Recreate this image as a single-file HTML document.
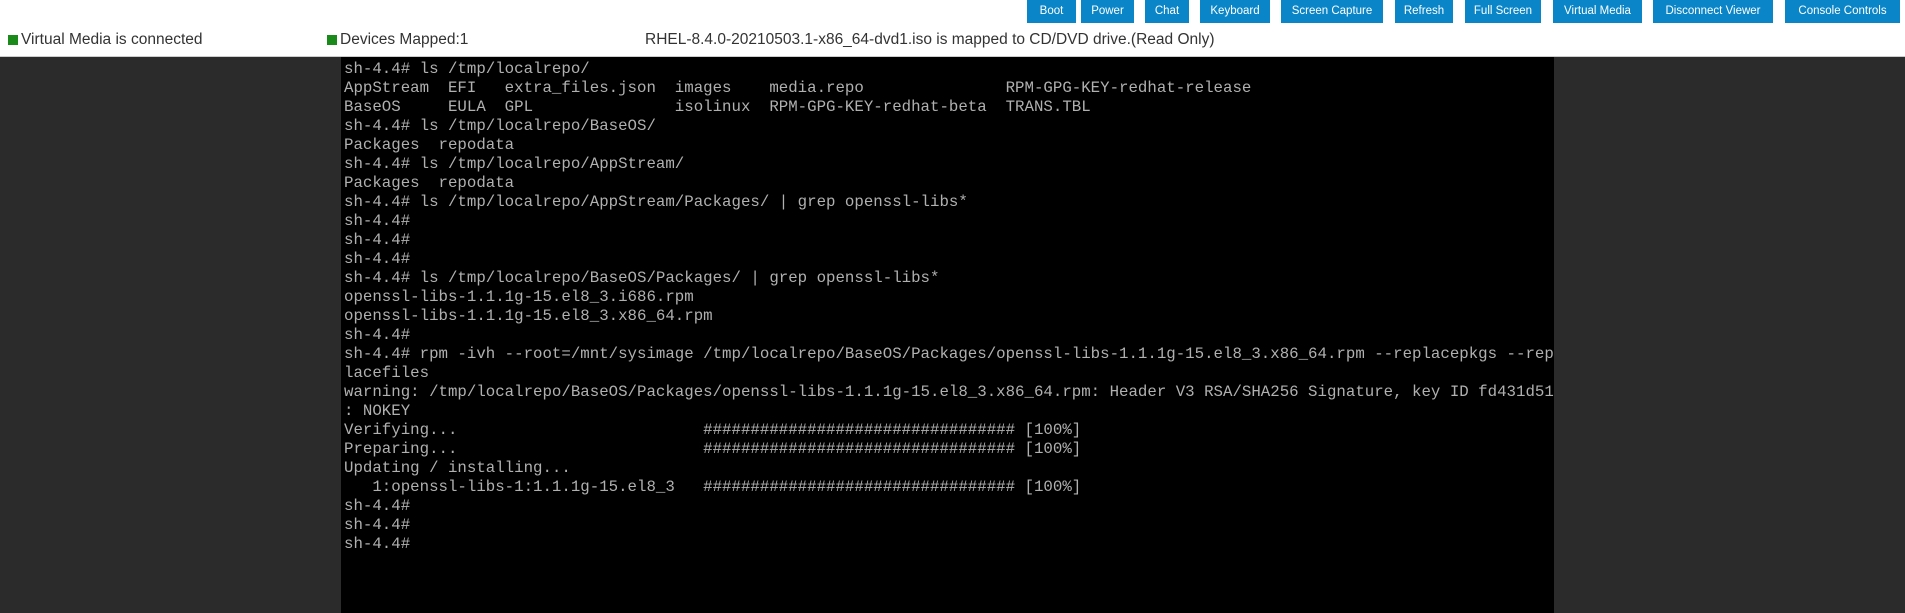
<!DOCTYPE html>
<html><head><meta charset="utf-8"><style>
*{margin:0;padding:0;box-sizing:border-box}
html,body{width:1905px;height:613px;overflow:hidden;background:#2b2b2b;font-family:"Liberation Sans",sans-serif}
#hdr{position:absolute;left:0;top:0;width:1905px;height:57px;background:#fff;border-bottom:1px solid #ccc}
.btn{position:absolute;top:0;height:23px;background:#0a85c7;color:#fff;font-size:11.5px;line-height:22px;text-align:center;white-space:nowrap}
.st{position:absolute;top:31px;font-size:15.5px;color:#333;white-space:nowrap}
.sq{display:inline-block;width:10px;height:10px;background:#1a8a1a;margin-right:3px;vertical-align:-1px}
#term{position:absolute;left:341px;top:57px;width:1213px;height:556px;background:#000;overflow:hidden}
pre{position:absolute;left:3px;top:3px;font-family:"Liberation Mono",monospace;font-size:15.75px;line-height:19px;color:#b0b0b0;letter-spacing:0}
</style></head><body>
<div id="hdr">
<div class="btn" style="left:1027px;width:49px">Boot</div>
<div class="btn" style="left:1081px;width:53px">Power</div>
<div class="btn" style="left:1145px;width:44px">Chat</div>
<div class="btn" style="left:1200px;width:70px">Keyboard</div>
<div class="btn" style="left:1281px;width:102px">Screen Capture</div>
<div class="btn" style="left:1395px;width:58px">Refresh</div>
<div class="btn" style="left:1465px;width:76px">Full Screen</div>
<div class="btn" style="left:1553px;width:89px">Virtual Media</div>
<div class="btn" style="left:1653px;width:120px">Disconnect Viewer</div>
<div class="btn" style="left:1785px;width:115px">Console Controls</div>
<div class="st" style="left:8px"><span class="sq"></span>Virtual Media is connected</div>
<div class="st" style="left:327px"><span class="sq"></span>Devices Mapped:1</div>
<div class="st" style="left:645px">RHEL-8.4.0-20210503.1-x86_64-dvd1.iso is mapped to CD/DVD drive.(Read Only)</div>
</div>
<div id="term"><pre>sh-4.4# ls /tmp/localrepo/
AppStream  EFI   extra_files.json  images    media.repo               RPM-GPG-KEY-redhat-release
BaseOS     EULA  GPL               isolinux  RPM-GPG-KEY-redhat-beta  TRANS.TBL
sh-4.4# ls /tmp/localrepo/BaseOS/
Packages  repodata
sh-4.4# ls /tmp/localrepo/AppStream/
Packages  repodata
sh-4.4# ls /tmp/localrepo/AppStream/Packages/ | grep openssl-libs*
sh-4.4#
sh-4.4#
sh-4.4#
sh-4.4# ls /tmp/localrepo/BaseOS/Packages/ | grep openssl-libs*
openssl-libs-1.1.1g-15.el8_3.i686.rpm
openssl-libs-1.1.1g-15.el8_3.x86_64.rpm
sh-4.4#
sh-4.4# rpm -ivh --root=/mnt/sysimage /tmp/localrepo/BaseOS/Packages/openssl-libs-1.1.1g-15.el8_3.x86_64.rpm --replacepkgs --rep
lacefiles
warning: /tmp/localrepo/BaseOS/Packages/openssl-libs-1.1.1g-15.el8_3.x86_64.rpm: Header V3 RSA/SHA256 Signature, key ID fd431d51
: NOKEY
Verifying...                          ################################# [100%]
Preparing...                          ################################# [100%]
Updating / installing...
   1:openssl-libs-1:1.1.1g-15.el8_3   ################################# [100%]
sh-4.4#
sh-4.4#
sh-4.4#</pre></div>
</body></html>
